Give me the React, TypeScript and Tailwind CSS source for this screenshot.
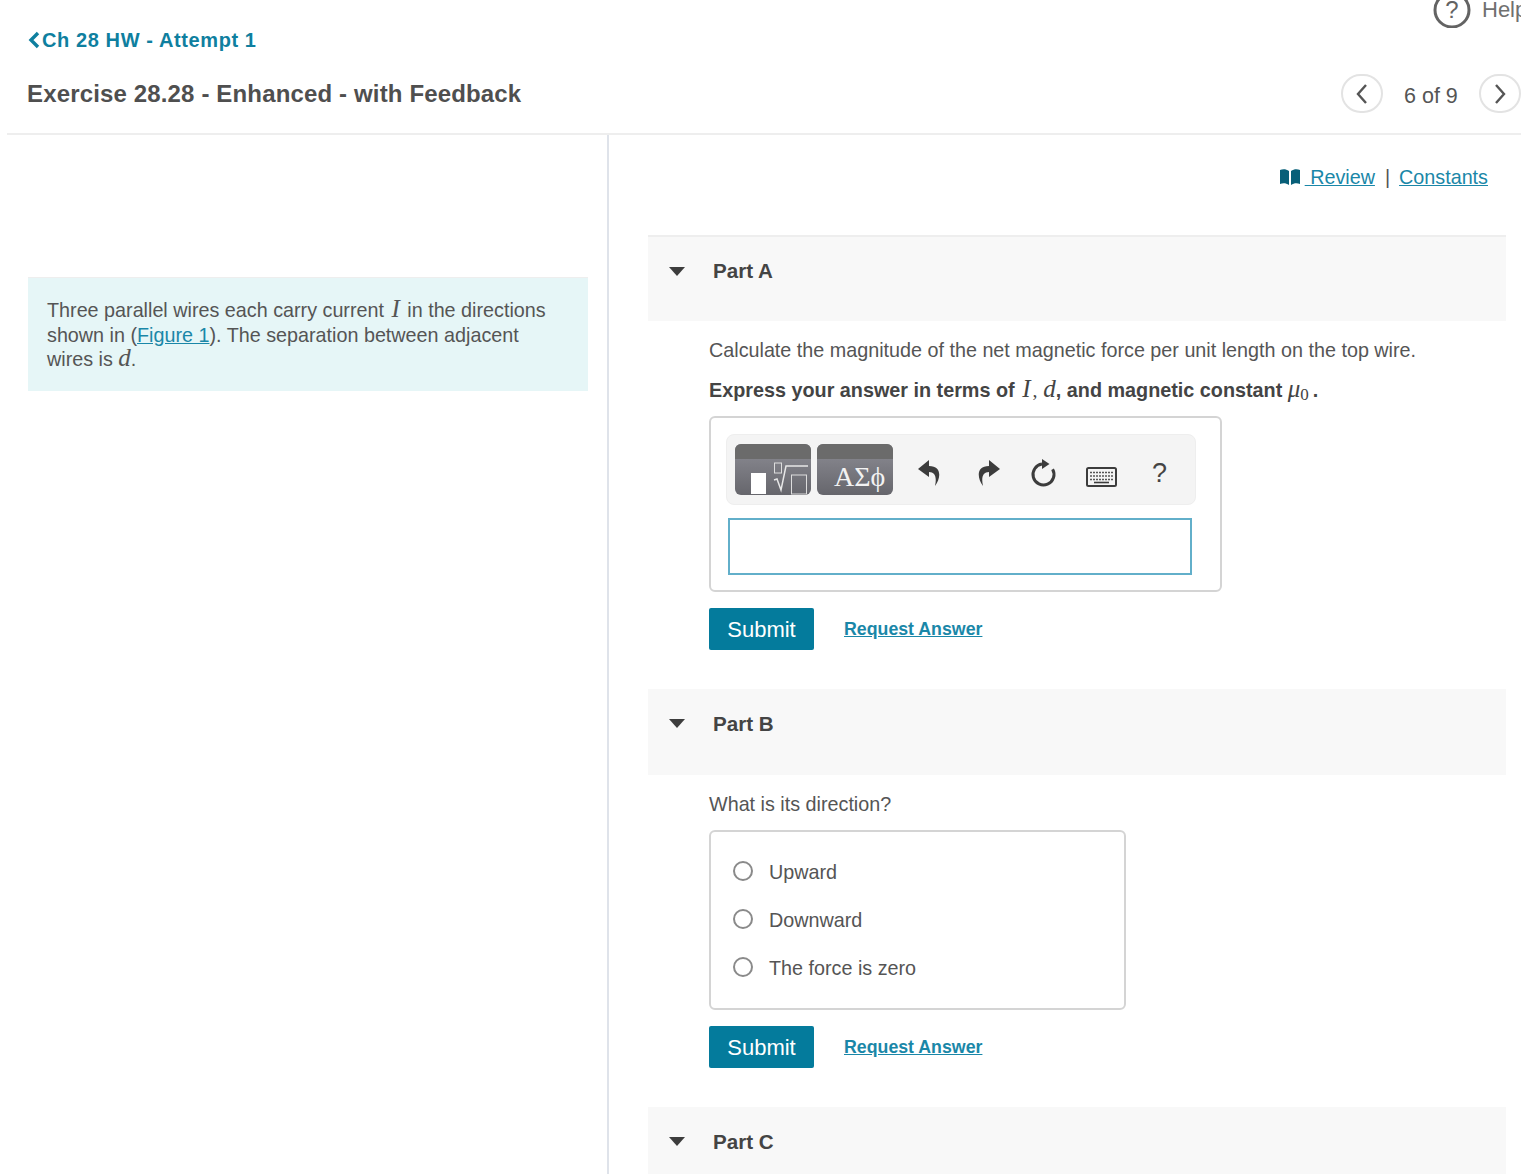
import React from "react";

const Teal = "text-[#0f7f9f]";
const LinkTeal = "text-[#1a87a8]";

function MathVar({ children, wide }: { children: React.ReactNode; wide?: boolean }) {
  return (
    <span className={`font-['Liberation_Serif',serif] italic text-[25px] leading-[0] font-normal ${wide ? "px-[2px]" : ""}`}>
      {children}
    </span>
  );
}

function PartHeader({ label, h = "h-[86px]", labelClass = "" }: { label: string; h?: string; labelClass?: string }) {
  return (
    <div className={`${h} bg-[#f8f8f8] flex items-start pt-[21px]`}>
      <svg width="16" height="10" viewBox="0 0 16 10" className="ml-[21px] mt-[9px]">
        <path d="M0 0h16L8 9z" fill="#3d3d3d" />
      </svg>
      <span className={`ml-[28px] font-bold text-[20.6px] leading-[28px] text-[#444] ${labelClass}`}>{label}</span>
    </div>
  );
}

function SubmitRow() {
  return (
    <div className="flex items-center mt-[16px] ml-[61px]">
      <button className="w-[105px] h-[42px] rounded-[2px] bg-[#047b9c] text-white text-[22px]">Submit</button>
      <a className={`ml-[30px] font-bold text-[17.75px] underline ${LinkTeal}`}>Request Answer</a>
    </div>
  );
}

function Toolbar() {
  return (
    <div className="h-[71px] w-[470px] ml-[15px] mt-[16px] rounded-[8px] bg-[#f4f4f4] border border-[#eeeeee] flex items-center pl-[8px]">
      <div className="relative w-[76px] h-[51px] rounded-[6px] overflow-hidden bg-gradient-to-b from-[#8e8e96] to-[#66666c]">
        <div className="h-[15px] bg-[#6b6b6b]" />
        <svg width="76" height="52" viewBox="0 0 76 52" className="absolute inset-0">
          <rect x="16" y="29" width="15" height="21" fill="#fff" />
          <rect x="39.5" y="19" width="7" height="10" fill="none" stroke="#ddd" strokeWidth="1" />
          <path d="M39 36l3-1 4 11 5-24h22" fill="none" stroke="#e6e6e6" strokeWidth="1.5" />
          <rect x="56.5" y="31" width="15" height="19" fill="none" stroke="#ddd" strokeWidth="1" />
        </svg>
      </div>
      <div className="relative ml-[6px] w-[76px] h-[51px] rounded-[6px] overflow-hidden bg-gradient-to-b from-[#8e8e96] to-[#66666c]">
        <div className="h-[15px] bg-[#6b6b6b]" />
        <span className="absolute left-[17px] top-[16px] font-['Liberation_Serif',serif] text-[28px] leading-[34px] text-[#f2f2f2]">ΑΣϕ</span>
      </div>
      <svg width="23" height="26" viewBox="0 0 23 26" className="ml-[25px] mt-[6px]">
        <path d="M11 0L0 9l11 8v-5c6 0 8 5 6 14 6-8 7-20-6-20z" fill="#3c3c3c" />
      </svg>
      <svg width="23" height="26" viewBox="0 0 23 26" className="ml-[36px] mt-[6px]">
        <path d="M12 0l11 9-11 8v-5c-6 0-8 5-6 14-6-8-7-20 6-20z" fill="#3c3c3c" />
      </svg>
      <svg width="30" height="30" viewBox="0 0 30 30" className="ml-[29px] mt-[7px]">
        <path d="M23.6 11.25A10.5 10.5 0 1 1 13 6.1" fill="none" stroke="#3c3c3c" strokeWidth="3" />
        <path d="M13 1l7.5 5-7.5 5z" fill="#3c3c3c" />
      </svg>
      <svg width="31" height="20" viewBox="0 0 31 20" className="ml-[27px] mt-[14px]">
        <rect x="1" y="1" width="29" height="18" rx="1.5" fill="#f4f4f4" stroke="#3c3c3c" strokeWidth="2" />
        <path d="M4 5.5h23M4 9h23M4 12.5h23" stroke="#555" strokeWidth="1.6" strokeDasharray="2 1" />
        <path d="M8 15.5h15" stroke="#3c3c3c" strokeWidth="1.6" />
      </svg>
      <span className="ml-[35px] text-[27px] leading-none text-[#444] mt-[8px]">?</span>
    </div>
  );
}

function Radio({ label }: { label: string }) {
  return (
    <div className="h-[48px] flex items-center pl-[22px]">
      <span className="w-[20px] h-[20px] rounded-full border-2 border-[#8a8a8a] bg-white -mt-[2px]" />
      <span className="ml-[16px] mt-[2px] text-[19.75px] text-[#555]">{label}</span>
    </div>
  );
}

export default function App() {
  return (
    <div className="w-[1521px] h-[1174px] overflow-hidden bg-white font-['Liberation_Sans',sans-serif] text-[19.75px] text-[#555]">
      {/* Header */}
      <div className="h-[135px] ml-[7px] border-b-2 border-[#eeeeee] flex justify-between">
        <div className="pl-[20px] pt-[26px]">
          <a className={`flex items-center font-bold text-[20px] leading-[28px] tracking-[0.6px] ${Teal}`}>
            <svg width="15" height="18" viewBox="0 0 15 18">
              <path d="M11 2L4 9l7 7" fill="none" stroke="#0f7f9f" strokeWidth="3.4" />
            </svg>
            Ch 28 HW - Attempt 1
          </a>
          <h1 className="mt-[25px] font-bold text-[24px] leading-[30px] tracking-[0.15px] text-[#4f4f4f]">
            Exercise 28.28 - Enhanced - with Feedback
          </h1>
        </div>
        <div className="w-[180px] overflow-hidden">
          <div className="h-[86px] -mt-[12px] flex items-start whitespace-nowrap pl-[92px]">
            <svg width="38" height="40" viewBox="0 0 38 40" className="shrink-0">
              <circle cx="19" cy="22" r="17" fill="none" stroke="#636363" strokeWidth="3" />
              <text x="19" y="30" fontSize="24" textAnchor="middle" fill="#636363">?</text>
            </svg>
            <span className="ml-[11px] mt-[5px] text-[22px] text-[#707070]">Help</span>
          </div>
          <div className="flex items-center">
            <span className="w-[42px] h-[39px] rounded-full border-2 border-[#e3e3e3] flex items-center justify-center shrink-0">
              <svg width="14" height="22" viewBox="0 0 14 22"><path d="M11 2L3 11l8 9" fill="none" stroke="#555" strokeWidth="2.4" /></svg>
            </span>
            <span className="ml-[21px] mt-[6px] text-[21.5px] whitespace-nowrap">6 of 9</span>
            <span className="ml-[21px] w-[42px] h-[39px] rounded-full border-2 border-[#e3e3e3] flex items-center justify-center shrink-0">
              <svg width="14" height="22" viewBox="0 0 14 22"><path d="M3 2l8 9-8 9" fill="none" stroke="#555" strokeWidth="2.4" /></svg>
            </span>
          </div>
        </div>
      </div>

      <div className="flex h-[1039px]">
        {/* Left column */}
        <div className="w-[609px] shrink-0 border-r-2 border-[#dfe3ea] pl-[28px] pr-[19px] pt-[142px]">
          <div className="h-[114px] bg-[#e6f6f7] border-t border-[#eeeeee] pl-[19px] pr-[20px] pt-[20px] leading-[24.5px]">
            Three parallel wires each carry current <MathVar wide>I</MathVar> in the directions shown in (<a className={`underline ${LinkTeal}`}>Figure 1</a>). The separation between adjacent wires is <MathVar>d</MathVar>.
          </div>
        </div>

        {/* Right column */}
        <div className="flex-1 pl-[39px] pr-[15px]">
          <div className="h-[100px] pt-[27px] flex items-start justify-end pr-[18px] leading-[30px]">
            <svg width="20" height="16" viewBox="0 0 20 16" className="mt-[7px]">
              <path d="M0 1c3-1 6-1 9 1v14c-3-2-6-2-9-1zM20 1c-3-1-6-1-9 1v14c3-2 6-2 9-1z" fill="#075f78" />
            </svg>
            <a className={`ml-[5px] underline ${LinkTeal}`}>&nbsp;Review</a>
            <span className="ml-[10px] mr-[9px]">|</span>
            <a className={`underline ${LinkTeal}`}>Constants</a>
          </div>

          {/* Part A */}
          <div className="border-t-2 border-[#eeeeee]">
            <PartHeader label="Part A" h="h-[84px]" labelClass="-mt-[1px]" />
          </div>
          <p className="ml-[61px] mt-[15px] leading-[28px]">Calculate the magnitude of the net magnetic force per unit length on the top wire.</p>
          <p className="ml-[61px] mt-[12px] leading-[28px] font-bold text-[19.8px] text-[#444]">
            Express your answer in terms of <MathVar wide>I</MathVar><span className="font-['Liberation_Serif',serif] font-normal mr-[1px]">,&nbsp;</span><MathVar>d</MathVar>, and magnetic constant <MathVar>μ</MathVar><span className="font-['Liberation_Serif',serif] font-normal text-[17px] align-[-3px] leading-[0]">0</span><span className="ml-[4px]">.</span>
          </p>
          <div className="ml-[61px] mt-[12px] w-[513px] h-[176px] border-2 border-[#d4d4d4] rounded-[6px] bg-white">
            <Toolbar />
            <div className="ml-[17px] mt-[13px] w-[464px] h-[57px] border-2 border-[#62afca]" />
          </div>
          <SubmitRow />

          {/* Part B */}
          <div className="mt-[39px]">
            <PartHeader label="Part B" />
          </div>
          <p className="ml-[61px] mt-[15px] leading-[28px]">What is its direction?</p>
          <div className="ml-[61px] mt-[12px] w-[417px] h-[180px] border-2 border-[#d4d4d4] rounded-[6px] py-[16px]">
            <Radio label="Upward" />
            <Radio label="Downward" />
            <Radio label="The force is zero" />
          </div>
          <SubmitRow />

          {/* Part C */}
          <div className="mt-[39px]">
            <PartHeader label="Part C" />
          </div>
        </div>
      </div>
    </div>
  );
}
